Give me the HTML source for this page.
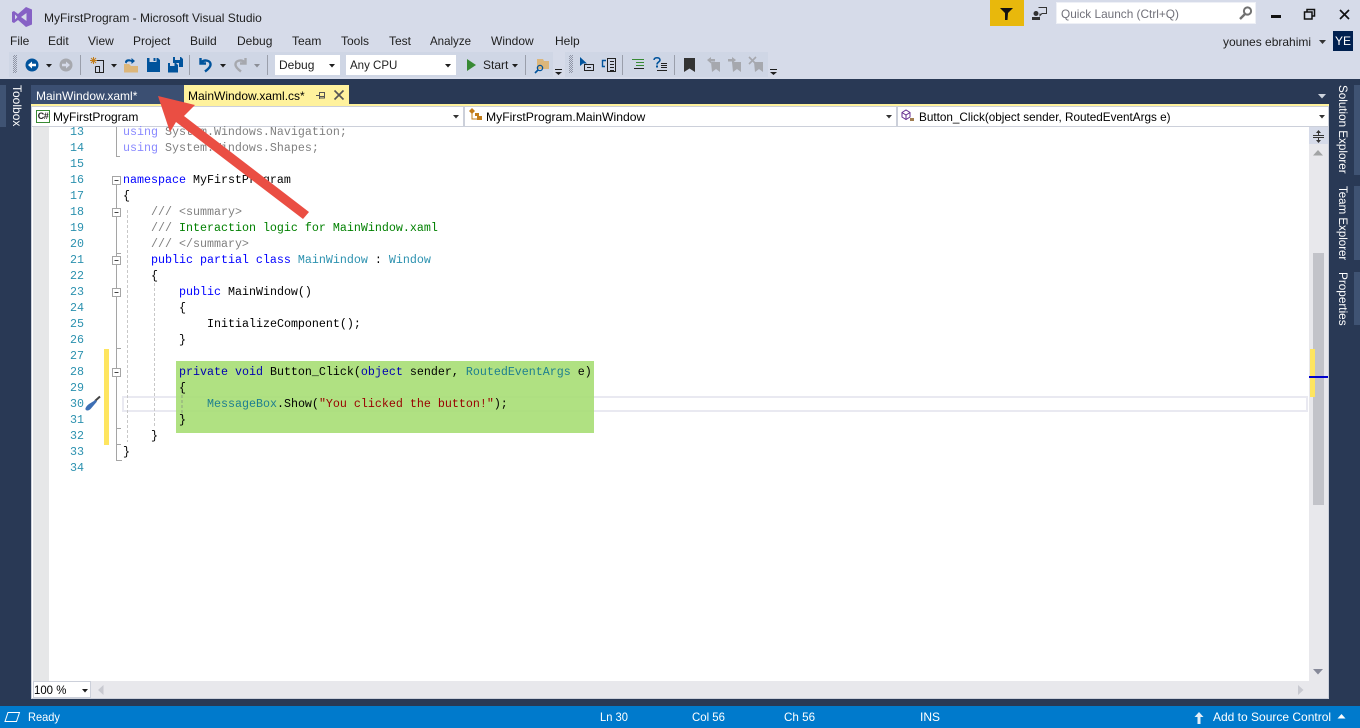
<!DOCTYPE html>
<html><head><meta charset="utf-8"><style>
html,body{margin:0;padding:0;width:1360px;height:728px;overflow:hidden;background:#293955}
#r{position:relative;width:1360px;height:728px;overflow:hidden;font-family:"Liberation Sans",sans-serif;font-size:12px;color:#1e1e1e}
.a{position:absolute}
.t{position:absolute;white-space:nowrap;line-height:16px;transform-origin:0 50%}
.c{position:absolute;white-space:pre;font-family:"Liberation Mono",monospace;font-size:11.67px;line-height:16px;height:16px;color:#000}
.n{position:absolute;left:60px;width:24px;text-align:right;font-family:"Liberation Mono",monospace;font-size:11.67px;line-height:16px;color:#2b91af}
.k{color:#0000ff}.u{color:#2b91af}.g{color:#008000}.x{color:#808080}.s{color:#a31515}
.m{top:33px}
.v{position:absolute;white-space:nowrap;color:#fff;line-height:14px;transform-origin:0 0}
.gr{position:absolute;background:repeating-conic-gradient(#8f95a5 0 25%,transparent 0 50%) 0 0/2px 2px}
svg{position:absolute;overflow:visible}
</style></head><body><div id="r">

<div class="a" style="left:0;top:0;width:1360px;height:79px;background:#d6dbe9"></div>
<div class="a" style="left:9px;top:52px;width:770px;height:25px;background:#cfd6e5"></div>
<div class="a" style="left:553px;top:52px;width:12px;height:25px;background:#d6dbe9"></div>
<div class="a" style="left:768px;top:52px;width:11px;height:25px;background:#d6dbe9"></div>
<div class="a" style="left:0;top:79px;width:1360px;height:627px;background:#293955"></div>
<div class="a" style="left:0;top:706px;width:1360px;height:22px;background:#007acc"></div>

<!-- VS logo -->
<svg style="left:12px;top:7px" width="20" height="20" viewBox="0 0 20 20"><path d="M0 5 L2 4 L6 7 L14 0 L20 2.5 V17.5 L14 20 L6 13 L2 16 L0 15 Z M3 7.5 V12.5 L5.5 10 Z M9 10 L14.5 14 V6 Z" fill="#8661c5" fill-rule="evenodd"/></svg>
<div class="t" style="left:44px;top:10px;font-size:12px;color:#1e1e1e">MyFirstProgram - Microsoft Visual Studio</div>

<!-- menu -->
<div class="t m" style="left:10px">File</div>
<div class="t m" style="left:48px">Edit</div>
<div class="t m" style="left:88px">View</div>
<div class="t m" style="left:133px">Project</div>
<div class="t m" style="left:190px">Build</div>
<div class="t m" style="left:237px">Debug</div>
<div class="t m" style="left:292px">Team</div>
<div class="t m" style="left:341px">Tools</div>
<div class="t m" style="left:389px">Test</div>
<div class="t m" style="left:430px;transform:scaleX(.96)">Analyze</div>
<div class="t m" style="left:491px">Window</div>
<div class="t m" style="left:555px">Help</div>

<!-- top right -->
<div class="a" style="left:990px;top:0;width:34px;height:26px;background:#e8b80c"></div>
<svg style="left:1000px;top:7px" width="14" height="14"><path d="M0 1 H13 L8 6 L7.5 13 L5 13 L5 6 Z" fill="#111"/></svg>
<svg style="left:1032px;top:6px" width="15" height="15" fill="none" stroke="#333"><path d="M6.5 1.5 H14.5 V7.5 H10 L8 9.5 V7.5" /><circle cx="4" cy="7.5" r="2.5" fill="#333" stroke="none"/><path d="M0 14 V11 H8 V14 Z" fill="#333" stroke="none"/></svg>
<div class="a" style="left:1056px;top:2px;height:22px;border:1px solid #eef0f6;background:#fff;box-sizing:border-box;width:200px"></div>
<div class="t" style="left:1061px;top:6px;color:#71717a;transform:scaleX(.985)">Quick Launch (Ctrl+Q)</div>
<svg style="left:1239px;top:6px" width="14" height="14" fill="none" stroke="#717171" stroke-width="2"><circle cx="8.5" cy="5" r="3.6"/><path d="M6 8 L1 13" stroke-width="2.4"/></svg>
<div class="a" style="left:1271px;top:15px;width:10px;height:3px;background:#111"></div>
<svg style="left:1304px;top:9px" width="11" height="11" fill="none" stroke="#111" stroke-width="1"><path d="M3 2.5 V.5 H10.5 V7 H8" stroke-width="1.5"/><rect x=".5" y="3" width="7.5" height="7" stroke-width="1.5"/></svg>
<svg style="left:1339px;top:9px" width="11" height="11" stroke="#111" stroke-width="1.7"><path d="M1 1 L10 10 M10 1 L1 10"/></svg>
<div class="t" style="left:1223px;top:34px">younes ebrahimi</div>
<svg style="left:1319px;top:40px" width="8" height="4"><path d="M0 0 H7 L3.5 4 Z" fill="#333"/></svg>
<div class="a" style="left:1333px;top:31px;width:20px;height:20px;background:#00204f;color:#fff;font-size:12px;line-height:20px;text-align:center">YE</div>

<!-- toolbar -->
<div class="gr" style="left:13px;top:55px;width:4px;height:18px"></div>
<svg style="left:25px;top:58px" width="14" height="14"><circle cx="7" cy="7" r="6.5" fill="#00539c"/><path d="M3 7 L7 3.5 V5.8 H11 V8.2 H7 V10.5 Z" fill="#fff"/></svg>
<svg style="left:46px;top:64px" width="7" height="4"><path d="M0 0 H6 L3 3.5 Z" fill="#1e1e1e"/></svg>
<svg style="left:59px;top:58px" width="14" height="14"><circle cx="7" cy="7" r="6.5" fill="#a6a8ae"/><path d="M11 7 L7 3.5 V5.8 H3 V8.2 H7 V10.5 Z" fill="#d6dbe9"/></svg>
<div class="a" style="left:80px;top:55px;width:1px;height:20px;background:#9a9fab"></div>
<svg style="left:90px;top:57px" width="16" height="16" fill="none" stroke="#222"><path d="M6.5 3.5 H13.5 V15.5 H7.5 M5.5 9.5 V15.5 H9.5 V9.5 H5.5"/><path d="M3.5 0 V7 M0 3.5 H7 M1 1 L6 6 M6 1 L1 6" stroke="#c27d1a"/></svg>
<svg style="left:111px;top:64px" width="7" height="4"><path d="M0 0 H6 L3 3.5 Z" fill="#1e1e1e"/></svg>
<svg style="left:124px;top:57px" width="15" height="16"><path d="M0 7 H5 L7 9 H14 V15.5 H0 Z" fill="#dcb67a"/><path d="M1 5.5 C1 2 5 1.5 7.5 3 V1 L11 4 L7.5 7 V5 C5.5 4 3 4 2.5 6.5 Z" fill="#00539c"/></svg>
<svg style="left:147px;top:58px" width="13" height="14"><path d="M0 0 H2.5 V4 H9.5 V0 H11 L13 2 V14 H0 Z" fill="#00539c"/><rect x="6.5" y="0" width="2" height="3" fill="#00539c"/></svg>
<svg style="left:168px;top:57px" width="15" height="16"><path d="M5 0 H7 V3 H12 V0 H13 L15 2 V10 H11 V6 H5 Z" fill="#00539c"/><path d="M0 6 H2 V9 H6.5 V6 H8 L10 8 V15.5 H0 Z" fill="#00539c"/></svg>
<div class="a" style="left:189px;top:55px;width:1px;height:20px;background:#9a9fab"></div>
<svg style="left:198px;top:57px" width="15" height="16" fill="none"><path d="M2.5 1 V6.5 H8 M2.5 6 C6 2 13 3 12.5 8 C12.3 10.5 9 13 7 14.5" stroke="#00539c" stroke-width="2.4"/></svg>
<svg style="left:220px;top:64px" width="7" height="4"><path d="M0 0 H6 L3 3.5 Z" fill="#1e1e1e"/></svg>
<svg style="left:233px;top:57px" width="15" height="16" fill="none"><path d="M12.5 1 V6.5 H7 M12.5 6 C9 2 2 3 2.5 8 C2.7 10.5 6 13 8 14.5" stroke="#a6a8ae" stroke-width="2.4"/></svg>
<svg style="left:254px;top:64px" width="7" height="4"><path d="M0 0 H6 L3 3.5 Z" fill="#8a8d95"/></svg>
<div class="a" style="left:267px;top:55px;width:1px;height:20px;background:#9a9fab"></div>
<div class="a" style="left:275px;top:55px;width:65px;height:20px;background:#fff"></div>
<div class="t" style="left:279px;top:57px">Debug</div>
<svg style="left:329px;top:64px" width="7" height="4"><path d="M0 0 H6 L3 3.5 Z" fill="#1e1e1e"/></svg>
<div class="a" style="left:346px;top:55px;width:110px;height:20px;background:#fff"></div>
<div class="t" style="left:350px;top:57px;transform:scaleX(.96)">Any CPU</div>
<svg style="left:445px;top:64px" width="7" height="4"><path d="M0 0 H6 L3 3.5 Z" fill="#1e1e1e"/></svg>
<svg style="left:467px;top:59px" width="10" height="12"><path d="M0 0 L9 6 L0 12 Z" fill="#388a34"/></svg>
<div class="t" style="left:483px;top:57px">Start</div>
<svg style="left:512px;top:64px" width="7" height="4"><path d="M0 0 H6 L3 3.5 Z" fill="#1e1e1e"/></svg>
<div class="a" style="left:525px;top:55px;width:1px;height:20px;background:#9a9fab"></div>
<svg style="left:534px;top:58px" width="16" height="16"><path d="M3 3 V1 H9 L10 3 H15 V11 H3 Z" fill="#dcb67a"/><circle cx="6" cy="10" r="2.6" fill="none" stroke="#00539c" stroke-width="1.3"/><path d="M4 12 L1 15" stroke="#00539c" stroke-width="1.6"/></svg>
<svg style="left:555px;top:69px" width="8" height="6"><path d="M0 0 H7 V1 H0 Z M0 3 H7 L3.5 6 Z" fill="#1e1e1e"/></svg>
<div class="gr" style="left:569px;top:55px;width:4px;height:18px"></div>
<svg style="left:580px;top:57px" width="14" height="15" fill="none" stroke="#222"><path d="M4.5 7.5 H13.5 V13.5 H4.5 Z M7 10.5 H11"/><path d="M0 0 V9 L3 6.5 H7 Z" fill="#00539c" stroke="none"/></svg>
<svg style="left:601px;top:58px" width="15" height="14" fill="none" stroke="#222"><path d="M6.5 .5 H14.5 V13.5 H6.5 Z M9 3.5 H13 M9 6.5 H13 M9 9.5 H13 M9 12.5 H13"/><path d="M5 2.5 H1.5 V8.5 H4" stroke="#00539c" stroke-width="1.4"/></svg>
<div class="a" style="left:622px;top:55px;width:1px;height:20px;background:#9a9fab"></div>
<svg style="left:632px;top:59px" width="14" height="12" stroke="#222"><path d="M0 .5 H12 " stroke="#388a34"/><path d="M4 3.5 H12 M4 6.5 H12" stroke="#388a34"/><path d="M2 9.5 H12"/></svg>
<svg style="left:653px;top:57px" width="15" height="15"><path d="M1 3 C1 0 7 0 7 3 C7 5 4 5 4 7.5" fill="none" stroke="#00539c" stroke-width="1.6"/><rect x="3" y="8.5" width="2" height="2" fill="#00539c"/><path d="M8 6.5 H14 M8 8.5 H14 M8 10.5 H14 M4 13.5 H14" stroke="#222"/></svg>
<div class="a" style="left:674px;top:55px;width:1px;height:20px;background:#9a9fab"></div>
<svg style="left:684px;top:58px" width="11" height="14"><path d="M0 0 H11 V14 L5.5 10.5 L0 14 Z" fill="#333"/></svg>
<svg style="left:707px;top:57px" width="13" height="15"><path d="M4 5 H13 V15 L9 12 L5 15 Z" fill="#a6a8ae"/><path d="M0 3 L4 0 V2 H8 V4.5 H4 V6.5 Z" fill="#a6a8ae"/></svg>
<svg style="left:728px;top:57px" width="13" height="15"><path d="M4 5 H13 V15 L9 12 L5 15 Z" fill="#a6a8ae"/><path d="M8 3 L4 0 V2 H0 V4.5 H4 V6.5 Z" fill="#a6a8ae"/></svg>
<svg style="left:749px;top:57px" width="14" height="15"><path d="M5 5 H14 V15 L10 12 L6 15 Z" fill="#a6a8ae"/><path d="M0 0 L7 7 M7 0 L0 7" stroke="#a6a8ae" stroke-width="1.6"/></svg>
<svg style="left:770px;top:69px" width="8" height="6"><path d="M0 0 H7 V1 H0 Z M0 3 H7 L3.5 6 Z" fill="#1e1e1e"/></svg>

<!-- side tabs -->
<div class="a" style="left:0;top:85px;width:6px;height:42px;background:#3f5373"></div>
<div class="v" style="left:24px;top:85px;transform:rotate(90deg)">Toolbox</div>
<div class="a" style="left:1354px;top:85px;width:6px;height:90px;background:#3f5373"></div>
<div class="a" style="left:1354px;top:186px;width:6px;height:74px;background:#3f5373"></div>
<div class="a" style="left:1354px;top:272px;width:6px;height:53px;background:#3f5373"></div>
<div class="v" style="left:1350px;top:85px;transform:rotate(90deg) scaleX(.97)">Solution Explorer</div>
<div class="v" style="left:1350px;top:186px;transform:rotate(90deg) scaleX(.96)">Team Explorer</div>
<div class="v" style="left:1350px;top:272px;transform:rotate(90deg) scaleX(.98)">Properties</div>

<!-- tabs -->
<div class="a" style="left:31px;top:85px;width:153px;height:20px;background:#3b4f72"></div>
<div class="t" style="left:36px;top:88px;color:#fff">MainWindow.xaml*</div>
<div class="a" style="left:184px;top:85px;width:165px;height:20px;background:#fff29d"></div>
<div class="t" style="left:188px;top:88px;color:#000">MainWindow.xaml.cs*</div>
<svg style="left:316px;top:91px" width="10" height="9" fill="none" stroke="#555"><path d="M0 4.5 H3 M3.5 1 V8 M3.5 1.5 H9 M3.5 7 H9 M8.5 1.5 V7 M3.5 5.5 H9"/></svg>
<svg style="left:334px;top:90px" width="10" height="10" stroke="#555" stroke-width="1.6"><path d="M.5 .5 L9.5 9.5 M9.5 .5 L.5 9.5"/></svg>
<svg style="left:1318px;top:94px" width="9" height="5"><path d="M0 0 H8 L4 4.5 Z" fill="#ced4dd"/></svg>
<div class="a" style="left:31px;top:104px;width:1298px;height:2px;background:#fff29d"></div>

<!-- nav bar -->
<div class="a" style="left:31px;top:106px;width:1298px;height:21px;background:#ccd0da"></div>
<div class="a" style="left:32px;top:107px;width:431px;height:19px;background:#fff"></div>
<div class="a" style="left:465px;top:107px;width:431px;height:19px;background:#fff"></div>
<div class="a" style="left:898px;top:107px;width:430px;height:19px;background:#fff"></div>
<div class="a" style="left:36px;top:110px;width:12px;height:11px;border:1px solid #388a34;background:#fff;font-size:9px;line-height:11px;text-align:center;font-weight:bold;color:#222;box-sizing:content-box;letter-spacing:-.5px">C#</div>
<div class="t" style="left:53px;top:109px;color:#000">MyFirstProgram</div>
<svg style="left:453px;top:115px" width="7" height="4"><path d="M0 0 H6 L3 3.5 Z" fill="#333"/></svg>
<svg style="left:469px;top:108px" width="14" height="15" fill="#c27d1a"><path d="M0 3 L3 0 L6 3 L3 6 Z M8 8 H13 V12 H8 Z M6 5 H10 V8 H6 Z"/><path d="M3 5 V11 H8" fill="none" stroke="#c27d1a"/></svg>
<div class="t" style="left:486px;top:109px;color:#000;transform:scaleX(1.012)">MyFirstProgram.MainWindow</div>
<svg style="left:886px;top:115px" width="7" height="4"><path d="M0 0 H6 L3 3.5 Z" fill="#333"/></svg>
<svg style="left:901px;top:109px" width="15" height="14" fill="none" stroke="#652d90"><path d="M1 3.5 L5 1 L9 3.5 V8 L5 10.5 L1 8 Z M1 3.5 L5 6 L9 3.5 M5 6 V10.5"/><rect x="9" y="9" width="4" height="3" fill="#a07d50" stroke="none"/></svg>
<div class="t" style="left:919px;top:109px;color:#000;transform:scaleX(.977)">Button_Click(object sender, RoutedEventArgs e)</div>
<svg style="left:1319px;top:115px" width="7" height="4"><path d="M0 0 H6 L3 3.5 Z" fill="#333"/></svg>

<!-- editor -->
<div class="a" style="left:31px;top:127px;width:1298px;height:572px;background:#fff;border:1px solid #ccd0da;border-top:0;box-sizing:border-box"></div>
<div class="a" style="left:33px;top:127px;width:16px;height:554px;background:#e6e7e8"></div>
<div class="a" style="left:122px;top:396px;width:1186px;height:16px;border:2px solid #e9e9f1;box-sizing:border-box;background:#fff"></div>

<!-- line numbers -->
<div class="n" style="top:124px">13</div><div class="n" style="top:140px">14</div><div class="n" style="top:156px">15</div><div class="n" style="top:172px">16</div><div class="n" style="top:188px">17</div><div class="n" style="top:204px">18</div><div class="n" style="top:220px">19</div><div class="n" style="top:236px">20</div><div class="n" style="top:252px">21</div><div class="n" style="top:268px">22</div><div class="n" style="top:284px">23</div><div class="n" style="top:300px">24</div><div class="n" style="top:316px">25</div><div class="n" style="top:332px">26</div><div class="n" style="top:348px">27</div><div class="n" style="top:364px">28</div><div class="n" style="top:380px">29</div><div class="n" style="top:396px">30</div><div class="n" style="top:412px">31</div><div class="n" style="top:428px">32</div><div class="n" style="top:444px">33</div><div class="n" style="top:460px">34</div>

<!-- change margin -->
<div class="a" style="left:104px;top:349px;width:5px;height:96px;background:#fee55f"></div>

<!-- outline -->
<svg style="left:110px;top:127px" width="80" height="340" fill="none" stroke="#a5a5a5" shape-rendering="crispEdges">
<path d="M6.5 0 V29.5 H10"/>
<path d="M6.5 58 V333.5 H12"/>
<path d="M6.5 90 V126.5 H11"/>
<path d="M6.5 138 V317.5 H11"/>
<path d="M6.5 170 V221.5 H11"/>
<path d="M6.5 250 V301.5 H11"/>
<g fill="#fff"><rect x="2.5" y="49.5" width="8" height="8"/><rect x="2.5" y="81.5" width="8" height="8"/><rect x="2.5" y="129.5" width="8" height="8"/><rect x="2.5" y="161.5" width="8" height="8"/><rect x="2.5" y="241.5" width="8" height="8"/></g>
<path d="M4.5 53.5 H8.5 M4.5 85.5 H8.5 M4.5 133.5 H8.5 M4.5 165.5 H8.5 M4.5 245.5 H8.5" stroke="#444"/>
<g stroke="#c8c8c8" stroke-dasharray="3 2"><path d="M17.5 83 V315"/><path d="M44.5 156 V300"/></g>
</svg>

<!-- code -->
<div class="a" style="left:176px;top:361px;width:418px;height:72px;background:#a7de74;opacity:.9"></div>
<svg style="left:181px;top:390px" width="3" height="30"><path d="M1 0 V30" stroke="#8da37f" stroke-dasharray="3 2"/></svg>
<div class="c x" style="left:123px;top:124px"><span style="color:#8a8aff">using</span> System.Windows.Navigation;</div>
<div class="c x" style="left:123px;top:140px"><span style="color:#8a8aff">using</span> System.Windows.Shapes;</div>
<div class="c" style="left:123px;top:172px"><span class="k">namespace</span> MyFirstProgram</div>
<div class="c" style="left:123px;top:188px">{</div>
<div class="c x" style="left:151px;top:204px">/// &lt;summary&gt;</div>
<div class="c" style="left:151px;top:220px"><span class="x">///</span> <span class="g">Interaction logic for MainWindow.xaml</span></div>
<div class="c x" style="left:151px;top:236px">/// &lt;/summary&gt;</div>
<div class="c" style="left:151px;top:252px"><span class="k">public partial class</span> <span class="u">MainWindow</span> : <span class="u">Window</span></div>
<div class="c" style="left:151px;top:268px">{</div>
<div class="c" style="left:179px;top:284px"><span class="k">public</span> MainWindow()</div>
<div class="c" style="left:179px;top:300px">{</div>
<div class="c" style="left:207px;top:316px">InitializeComponent();</div>
<div class="c" style="left:179px;top:332px">}</div>
<div class="c" style="left:179px;top:364px"><span style="color:#0000b0">private void</span> Button_Click(<span style="color:#0000b0">object</span> sender, <span style="color:#1e7f8f">RoutedEventArgs</span> e)</div>
<div class="c" style="left:179px;top:380px">{</div>
<div class="c" style="left:207px;top:396px"><span style="color:#1e7f8f">MessageBox</span>.Show(<span style="color:#990000">"You clicked the button!"</span>);</div>
<div class="c" style="left:179px;top:412px">}</div>
<div class="c" style="left:151px;top:428px">}</div>
<div class="c" style="left:123px;top:444px">}</div>

<!-- screwdriver -->
<svg style="left:85px;top:396px" width="16" height="16"><path d="M15 .5 L10 5" stroke="#444" stroke-width="2"/><path d="M10.5 4 L12 5.5 L6 12.5 C4 15 1.5 15 .5 13.5 C0 12 2 9.5 4 8 Z" fill="#3d6fb5"/></svg>

<!-- v scrollbar -->
<div class="a" style="left:1309px;top:127px;width:19px;height:554px;background:#e8e8ec"></div>
<div class="a" style="left:1309px;top:127px;width:19px;height:17px;background:#d6dbe9"></div>
<svg style="left:1313px;top:130px" width="11" height="13"><path d="M0 5.5 H11 M0 7.5 H11" stroke="#333"/><path d="M5.5 0 L8 3 H3 Z M5.5 13 L3 10 H8 Z" fill="#333"/><path d="M5.5 2 V5 M5.5 8 V11" stroke="#333"/></svg>
<svg style="left:1313px;top:150px" width="10" height="6"><path d="M5 0 L10 5.5 H0 Z" fill="#a2a4a5"/></svg>
<div class="a" style="left:1313px;top:253px;width:11px;height:252px;background:#c2c3c9"></div>
<div class="a" style="left:1310px;top:349px;width:5px;height:48px;background:#fee55f"></div>
<div class="a" style="left:1309px;top:376px;width:19px;height:2px;background:#0000cd"></div>
<svg style="left:1313px;top:669px" width="10" height="6"><path d="M0 0 H10 L5 5.5 Z" fill="#868999"/></svg>

<!-- h scrollbar / zoom -->
<div class="a" style="left:33px;top:681px;width:1295px;height:17px;background:#e8e8ec"></div>
<div class="a" style="left:33px;top:681px;width:58px;height:17px;background:#fff;border:1px solid #ccd0da;box-sizing:border-box"></div>
<div class="t" style="left:34px;top:682px;color:#000;transform:scaleX(.95)">100 %</div>
<svg style="left:82px;top:689px" width="7" height="4"><path d="M0 0 H6 L3 3.5 Z" fill="#1e1e1e"/></svg>
<svg style="left:98px;top:685px" width="6" height="10"><path d="M5.5 0 V10 L0 5 Z" fill="#c8c9d0"/></svg>
<svg style="left:1298px;top:685px" width="6" height="10"><path d="M0 0 V10 L5.5 5 Z" fill="#c8c9d0"/></svg>

<!-- status -->
<svg style="left:4px;top:712px" width="17" height="11" fill="none" stroke="#fff"><path d="M4 .5 H15.5 L12.5 9.5 H1 Z"/></svg>
<div class="t" style="left:28px;top:709px;color:#fff;transform:scaleX(.92)">Ready</div>
<div class="t" style="left:600px;top:709px;color:#fff;transform:scaleX(.93)">Ln 30</div>
<div class="t" style="left:692px;top:709px;color:#fff;transform:scaleX(.95)">Col 56</div>
<div class="t" style="left:784px;top:709px;color:#fff;transform:scaleX(.97)">Ch 56</div>
<div class="t" style="left:920px;top:709px;color:#fff">INS</div>
<svg style="left:1194px;top:712px" width="10" height="12"><path d="M5 0 L9.5 5 H6.5 V12 H3.5 V5 H.5 Z" fill="#e4eef7"/></svg>
<div class="t" style="left:1213px;top:709px;color:#fff">Add to Source Control</div>
<svg style="left:1337px;top:714px" width="9" height="5"><path d="M4.5 0 L8.5 4.5 H.5 Z" fill="#fff"/></svg>

<!-- arrow -->
<svg style="left:0;top:0" width="1360" height="728"><path d="M158 96 L195 105 L184 116 L309 212 L303 219 L176 122 L170 132 Z" fill="#ea4e43"/></svg>

</div></body></html>
